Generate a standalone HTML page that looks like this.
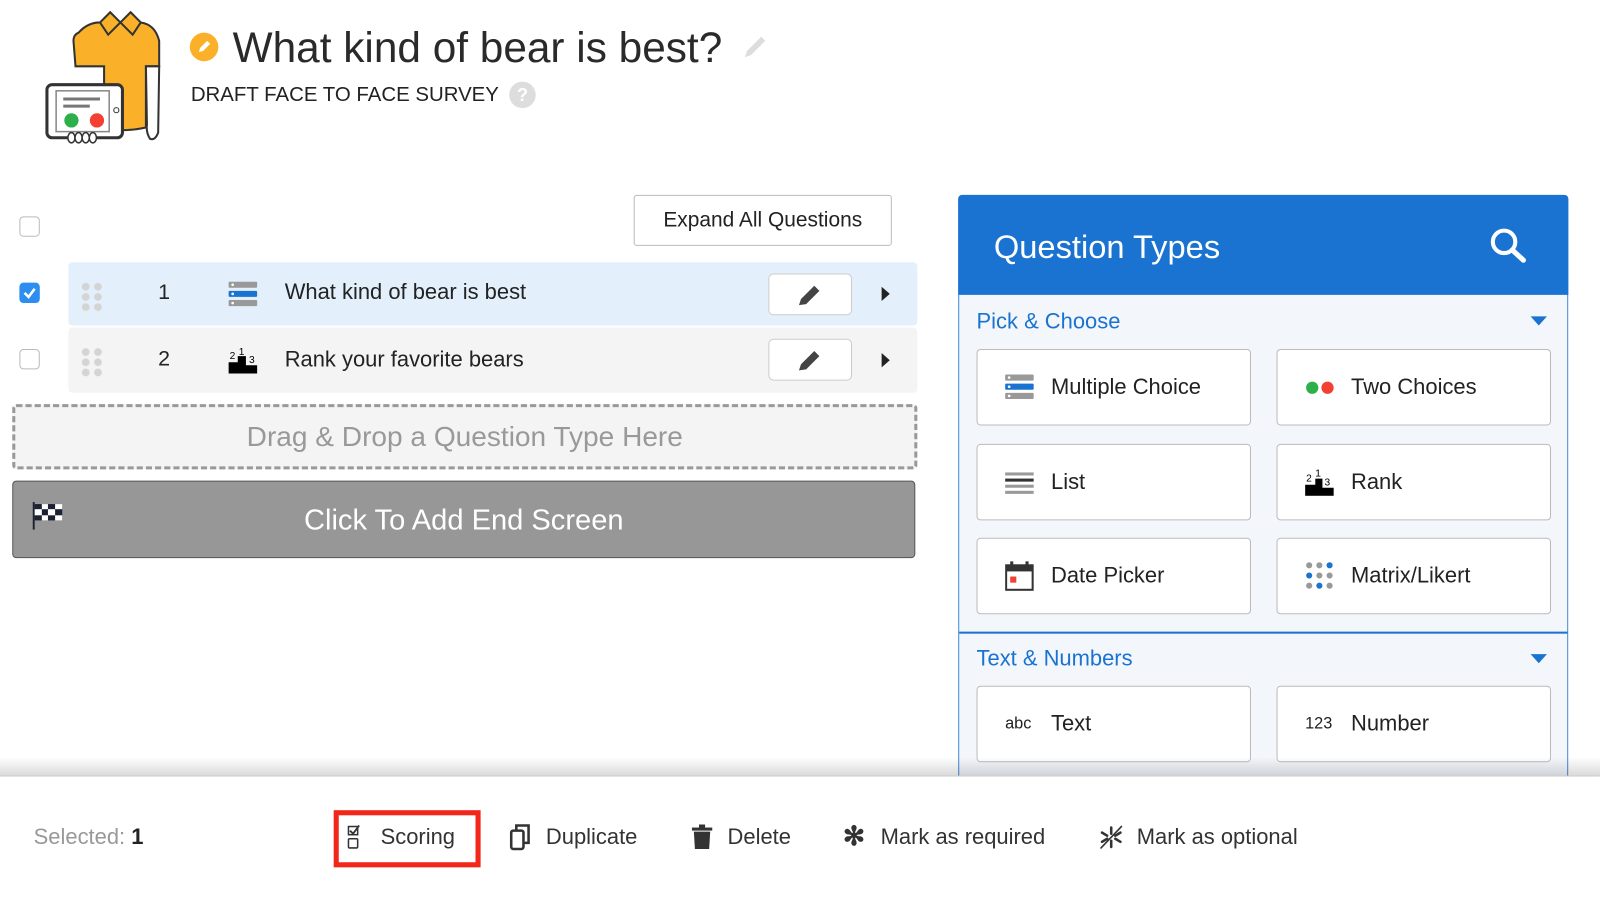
<!DOCTYPE html>
<html><head><meta charset="utf-8"><style>
html,body{margin:0;padding:0;width:1600px;height:897px;overflow:hidden;background:#fff;font-family:"Liberation Sans",Arial,sans-serif;color:#222}
#w{position:absolute;left:0;top:0;width:1568px;height:879px;transform:scale(1.0204);transform-origin:0 0}
.a{position:absolute}
.cb{position:absolute;left:19px;width:18px;height:18px;border:1.5px solid #bbb;border-radius:4px;background:#fff}
.row{position:absolute;left:67px;width:832px;height:62px;border-radius:4px}
.dots{position:absolute;left:11px;top:19px;width:24px;height:30px;background:radial-gradient(circle,#d4d4d4 3.5px,transparent 4px) 0 0/12px 10px}
.num{position:absolute;left:88px;top:18px;font-size:21px}
.qt{position:absolute;left:212px;top:17px;font-size:21.5px}
.eb{position:absolute;left:686px;top:11px;width:80px;height:39px;border:1px solid #ccc;border-radius:5px;background:#fff}
.tri{position:absolute;left:797px;top:24px;width:0;height:0;border-left:8px solid #222;border-top:7px solid transparent;border-bottom:7px solid transparent}
.card{position:absolute;width:267px;height:73px;border:1px solid #bbb;border-radius:4px;background:#fff;font-size:21.5px}
.card span.t{position:absolute;left:72px;top:24px}
.card .ic{position:absolute;left:27px;top:23px}
.bb{position:absolute;top:808px;font-size:21.5px;color:#333}
</style></head><body><div id="w">
<svg class="a" style="left:40px;top:10px" width="125" height="135" viewBox="0 0 125 135">
<path d="M37 22 Q46 12 58 12 L68 2 L78 12 L88 2 L98 12 Q112 14 116 30 L116 55 L103 55 L103 115 Q80 120 62 115 L62 55 L34 55 L32 30 Q32 24 37 22Z" fill="#fbb02a" stroke="#333" stroke-width="2"/>
<path d="M58 12 L66 24 L78 12 L90 24 L98 12" fill="#fbb02a" stroke="#333" stroke-width="2"/>
<path d="M103 55 L116 55 L115 120 Q112 128 107 126 Q103 120 104 112Z" fill="#fff" stroke="#333" stroke-width="2"/>
<rect x="6" y="73" width="74" height="52" rx="5" fill="#fff" stroke="#333" stroke-width="3"/>
<rect x="15" y="79" width="52" height="40" fill="#fff" stroke="#888" stroke-width="1.5"/>
<line x1="22" y1="87" x2="58" y2="87" stroke="#777" stroke-width="3"/>
<line x1="22" y1="94" x2="48" y2="94" stroke="#777" stroke-width="3"/>
<circle cx="30" cy="108" r="7" fill="#2db04a"/><circle cx="55" cy="108" r="7" fill="#f34032"/>
<circle cx="74" cy="98" r="2.5" fill="#fff" stroke="#333"/>
<g fill="#fff" stroke="#333" stroke-width="1.5"><ellipse cx="30" cy="125" rx="3.5" ry="5"/><ellipse cx="37" cy="125" rx="3.5" ry="5"/><ellipse cx="44" cy="125" rx="3.5" ry="5"/><ellipse cx="51" cy="125" rx="3.5" ry="5"/></g>
</svg>
<div class="a" style="left:186px;top:32px;width:28px;height:28px;border-radius:50%;background:#fbb02a"></div>
<svg class="a" style="left:191px;top:37px" width="18" height="18" viewBox="0 0 18 18"><path d="M4 14 L5 10 L12 3 L15 6 L8 13Z" fill="#fff"/></svg>
<div class="a" style="left:228px;top:23px;font-size:41.5px;color:#2a2a2a">What kind of bear is best?</div>
<svg class="a" style="left:727px;top:33px" width="26" height="26" viewBox="0 0 26 26"><path d="M3 23 L5 17 L19 3 L23 7 L9 21Z" fill="#ddd"/></svg>
<div class="a" style="left:187px;top:82px;font-size:20px;color:#222">DRAFT FACE TO FACE SURVEY</div>
<div class="a" style="left:499px;top:80px;width:26px;height:26px;border-radius:50%;background:#ddd;color:#fff;font-size:18px;font-weight:bold;text-align:center;line-height:26px">?</div>
<div class="cb" style="top:212px"></div>
<div class="a" style="left:621px;top:191px;width:251px;height:48px;border:1px solid #bbb;border-radius:3px;font-size:20.5px;text-align:center;line-height:48px">Expand All Questions</div>
<div class="cb" style="top:277px;background:#2e8ef0;border-color:#2e8ef0"><svg width="18" height="18" viewBox="0 0 18 18"><path d="M4 9 L8 13 L14 5" stroke="#fff" stroke-width="2.5" fill="none"/></svg></div>
<div class="cb" style="top:342px"></div>
<div class="row" style="top:257px;background:#e3f0fb">
<div class="dots"></div><div class="num">1</div>
<svg class="a" style="left:157px;top:19px" width="29" height="25"><rect x="0" y="0" width="28" height="6" rx="1" fill="#999"/><rect x="0" y="9" width="28" height="6" rx="1" fill="#1a73d0"/><rect x="0" y="18" width="28" height="6" rx="1" fill="#999"/><circle cx="4" cy="3" r="1.3" fill="#fff"/><circle cx="4" cy="12" r="1.3" fill="#fff"/><circle cx="4" cy="21" r="1.3" fill="#fff"/></svg>
<div class="qt">What kind of bear is best</div>
<div class="eb"><svg style="position:absolute;left:27px;top:8px" width="26" height="24"><path d="M2 22 L4 16 L17 3 L22 8 L9 21Z" fill="#444"/></svg></div><div class="tri"></div></div>
<div class="row" style="top:321px;height:64px;background:#f4f4f4">
<div class="dots"></div><div class="num" style="top:19px">2</div>
<svg class="a" style="left:157px;top:19px" width="29" height="26"><text x="1" y="12" font-size="10" font-family="Liberation Sans">2</text><text x="10" y="8" font-size="10" font-family="Liberation Sans">1</text><text x="20" y="16" font-size="10" font-family="Liberation Sans">3</text><path d="M0 15 L9 15 L9 9 L17 9 L17 18 L28 18 L28 26 L0 26Z" fill="#000"/></svg>
<div class="qt" style="top:19px">Rank your favorite bears</div>
<div class="eb"><svg style="position:absolute;left:27px;top:8px" width="26" height="24"><path d="M2 22 L4 16 L17 3 L22 8 L9 21Z" fill="#444"/></svg></div><div class="tri" style="top:25px"></div></div>
<div class="a" style="left:12px;top:396px;width:881px;height:58px;border:3px dashed #999;border-radius:4px;background:#f4f4f4;color:#999;font-size:27.5px;text-align:center;line-height:58px">Drag &amp; Drop a Question Type Here</div>
<div class="a" style="left:12px;top:471px;width:883px;height:74px;border:1px solid #555;border-radius:4px;background:#979797;color:#fff;font-size:28.5px;text-align:center;line-height:76px">Click To Add End Screen</div>
<svg class="a" style="left:32px;top:492px" width="30" height="28"><rect x="0" y="0" width="2" height="27" fill="#1c2233"/><rect x="2" y="2" width="27" height="16" fill="#1c2233"/><g fill="#fff"><rect x="2" y="7" width="7" height="6"/><rect x="15" y="7" width="7" height="6"/><rect x="9" y="2" width="6" height="5"/><rect x="9" y="13" width="6" height="5"/><rect x="22" y="2" width="7" height="5"/><rect x="22" y="13" width="7" height="5"/></g></svg>
<div class="a" style="left:939px;top:191px;width:596px;height:580px;background:#f3f6fb;border:1px solid #1a73d0;border-top:none;border-radius:4px 4px 0 0"></div>
<div class="a" style="left:939px;top:191px;width:598px;height:98px;background:#1a73d0;border-radius:4px 4px 0 0"></div>
<div class="a" style="left:974px;top:224px;font-size:32px;color:#fff">Question Types</div>
<svg class="a" style="left:1458px;top:221px" width="40" height="40"><circle cx="16" cy="16" r="11" stroke="#fff" stroke-width="4" fill="none"/><line x1="24" y1="24" x2="35" y2="34" stroke="#fff" stroke-width="5" stroke-linecap="round"/></svg>
<div class="a" style="left:957px;top:303px;font-size:21.5px;color:#1a73d0">Pick &amp; Choose</div>
<div class="a" style="left:1500px;top:310px;border-top:9px solid #1a73d0;border-left:8px solid transparent;border-right:8px solid transparent"></div>
<div class="a" style="left:940px;top:619px;width:596px;height:2px;background:#1a73d0"></div>
<div class="a" style="left:957px;top:633px;font-size:21.5px;color:#1a73d0">Text &amp; Numbers</div>
<div class="a" style="left:1500px;top:641px;border-top:9px solid #1a73d0;border-left:8px solid transparent;border-right:8px solid transparent"></div>
<div class="card" style="left:957px;top:342px"><svg class="ic" width="29" height="26"><rect x="0" y="1" width="28" height="6" rx="1" fill="#999"/><rect x="0" y="10" width="28" height="6" rx="1" fill="#1a73d0"/><rect x="0" y="19" width="28" height="6" rx="1" fill="#999"/><circle cx="4" cy="4" r="1.3" fill="#fff"/><circle cx="4" cy="13" r="1.3" fill="#fff"/><circle cx="4" cy="22" r="1.3" fill="#fff"/></svg><span class="t">Multiple Choice</span></div>
<div class="card" style="left:1251px;top:342px"><svg class="ic" width="30" height="26"><circle cx="7" cy="14" r="6" fill="#2db04a"/><circle cx="22" cy="14" r="6" fill="#f34032"/></svg><span class="t">Two Choices</span></div>
<div class="card" style="left:957px;top:435px"><svg class="ic" width="29" height="26"><rect x="0" y="4" width="28" height="3" fill="#999"/><rect x="0" y="10" width="28" height="3" fill="#333"/><rect x="0" y="16" width="28" height="3" fill="#999"/><rect x="0" y="22" width="28" height="3" fill="#999"/></svg><span class="t">List</span></div>
<div class="card" style="left:1251px;top:435px"><svg class="ic" width="29" height="28" style="top:22px"><text x="1" y="14" font-size="10" font-family="Liberation Sans">2</text><text x="10" y="9" font-size="10" font-family="Liberation Sans">1</text><text x="19" y="18" font-size="10" font-family="Liberation Sans">3</text><path d="M0 17 L10 17 L10 11 L17 11 L17 20 L28 20 L28 28 L0 28Z" fill="#000"/></svg><span class="t">Rank</span></div>
<div class="card" style="left:957px;top:527px"><svg class="ic" width="29" height="30" style="top:22px"><rect x="1" y="4" width="26" height="24" fill="#fff" stroke="#333" stroke-width="2"/><rect x="1" y="4" width="26" height="6" fill="#333"/><rect x="5" y="0" width="3" height="6" fill="#333"/><rect x="20" y="0" width="3" height="6" fill="#333"/><rect x="5" y="15" width="6" height="6" fill="#f34032"/></svg><span class="t">Date Picker</span></div>
<div class="card" style="left:1251px;top:527px"><svg class="ic" width="30" height="28" style="top:22px"><g fill="#999"><circle cx="4" cy="4" r="3"/><circle cx="14" cy="4" r="3"/><circle cx="14" cy="14" r="3"/><circle cx="24" cy="14" r="3"/><circle cx="4" cy="24" r="3"/><circle cx="24" cy="24" r="3"/></g><g fill="#1a73d0"><circle cx="24" cy="4" r="3"/><circle cx="4" cy="14" r="3"/><circle cx="14" cy="24" r="3"/></g></svg><span class="t">Matrix/Likert</span></div>
<div class="card" style="left:957px;top:672px"><span class="ic" style="font-size:16px;top:28px">abc</span><span class="t">Text</span></div>
<div class="card" style="left:1251px;top:672px"><span class="ic" style="font-size:16px;top:28px">123</span><span class="t">Number</span></div>
<div class="a" style="left:0;top:742px;width:1568px;height:18px;background:linear-gradient(to bottom,rgba(0,0,0,0),rgba(0,0,0,0.14))"></div>
<div class="a" style="left:0;top:760px;width:1568px;height:119px;background:#fff;border-top:1px solid #ccc"></div>
<div class="bb" style="left:33px;color:#999">Selected: <b style="color:#222">1</b></div>
<div class="a" style="left:327px;top:794px;width:134px;height:46px;border:5px solid #f3261a"></div>
<svg class="a" style="left:340px;top:808px" width="16" height="26"><rect x="1.5" y="2" width="9" height="8" fill="none" stroke="#333" stroke-width="1.5"/><path d="M3 6 L6 9 L12 1" stroke="#333" stroke-width="1.8" fill="none"/><rect x="1.5" y="14" width="9" height="9" rx="1" fill="none" stroke="#333" stroke-width="1.5"/></svg>
<div class="bb" style="left:373px">Scoring</div>
<svg class="a" style="left:499px;top:807px" width="22" height="28"><rect x="2" y="7" width="12" height="18" rx="2" fill="none" stroke="#333" stroke-width="2.5"/><path d="M7 6 L7 2 L19 2 L19 19 L15 19" fill="none" stroke="#333" stroke-width="2.5"/></svg>
<div class="bb" style="left:535px">Duplicate</div>
<svg class="a" style="left:678px;top:808px" width="22" height="26"><rect x="0" y="3" width="20" height="3" fill="#333"/><rect x="7" y="0" width="6" height="4" fill="#333"/><path d="M2 7 L18 7 L17 24 L3 24Z" fill="#333"/></svg>
<div class="bb" style="left:713px">Delete</div>
<div class="bb" style="left:826px;font-size:26px;top:804px;font-weight:bold">✻</div>
<div class="bb" style="left:863px">Mark as required</div>
<svg class="a" style="left:1077px;top:808px" width="26" height="26"><g stroke="#333" stroke-width="2.5" stroke-linecap="round"><line x1="12" y1="3" x2="12" y2="9"/><line x1="12" y1="16" x2="12" y2="22"/><line x1="3" y1="8" x2="8" y2="11"/><line x1="16" y1="14" x2="21" y2="17"/><line x1="3" y1="17" x2="8" y2="14"/><line x1="16" y1="11" x2="21" y2="8"/><line x1="2" y1="23" x2="22" y2="2" stroke-width="1.6"/></g></svg>
<div class="bb" style="left:1114px">Mark as optional</div>
</div></body></html>
